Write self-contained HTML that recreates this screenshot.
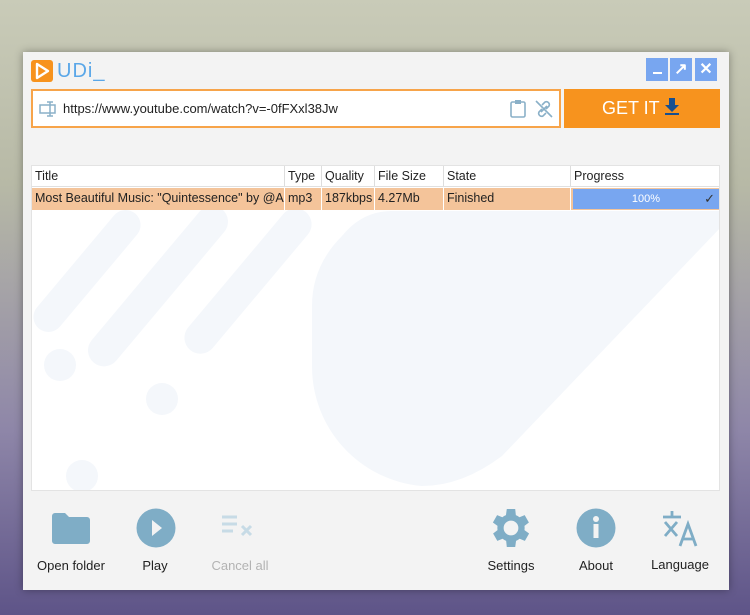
<!DOCTYPE html>
<html><head><meta charset="utf-8"><style>
*{margin:0;padding:0;box-sizing:border-box}
body{width:750px;height:615px;overflow:hidden;position:relative;font-family:"Liberation Sans",sans-serif;
background:linear-gradient(180deg,#c9cbb8 0%,#b7b9a6 30%,#8e86a8 70%,#5e5488 100%);}
.win{position:absolute;left:23px;top:52px;width:706px;height:538px;background:#f3f3f3;box-shadow:0 0 8px rgba(0,0,0,.35)}
.abs{position:absolute}
.tb{position:absolute;top:6px;width:22px;height:23px;background:#78a6f0;color:#fff;font-size:16px;text-align:center;line-height:23px;font-weight:bold}
.th,.td{position:absolute;top:0;height:100%;font-size:12.5px;color:#222;padding-left:3px;line-height:21px;white-space:nowrap;overflow:hidden}
.th{border-right:1px solid #ddd}
.lbl{position:absolute;top:506px;width:100px;text-align:center;font-size:13px;color:#222}
</style></head><body>
<div class="win">
  <svg class="abs" style="left:8px;top:8px" width="22" height="22"><rect width="22" height="22" rx="3" fill="#f7931e"/><path d="M6 4 L17 11 L6 18 Z" fill="none" stroke="#fff" stroke-width="2.4" stroke-linejoin="round"/></svg>
  <div class="abs" style="left:34px;top:8px;font-size:20px;color:#5aa7e8;letter-spacing:1px">UDi_</div>
  <div class="tb" style="left:623px"><span style="display:block;width:9px;height:2px;background:#fff;margin:14px auto 0"></span></div>
  <div class="tb" style="left:647px">&#8599;</div>
  <div class="tb" style="left:672px">&#10005;</div>
  <div class="abs" style="left:8px;top:37px;width:530px;height:39px;background:#fff;border:2px solid #f7a44a"></div>
  <svg class="abs" style="left:16px;top:48px" width="18" height="18"><rect x="1" y="5" width="15" height="8" fill="none" stroke="#8ab0c8" stroke-width="1.5"/><path d="M11 2V16M8 2H14M8 16H14" stroke="#8ab0c8" stroke-width="1.5"/></svg>
  <div class="abs" style="left:40px;top:49px;font-size:13px;color:#222">https://www.youtube.com/watch?v=-0fFXxl38Jw</div>
  <svg class="abs" style="left:486px;top:47px" width="18" height="20"><rect x="2" y="3" width="14" height="15" rx="1.5" fill="none" stroke="#8ab0c8" stroke-width="1.6"/><rect x="6" y="1" width="6" height="4" fill="#8ab0c8"/></svg>
  <svg class="abs" style="left:511px;top:47px" width="20" height="20"><path d="M8 6l3-3a3 3 0 014 4l-3 3M12 14l-3 3a3 3 0 01-4-4l3-3M7 13l6-6M2 2l16 16" fill="none" stroke="#8ab0c8" stroke-width="1.6"/></svg>
  <div class="abs" style="left:541px;top:37px;width:156px;height:39px;background:#f7931e;color:#fff;font-size:18px;line-height:39px;padding-left:38px">GET IT <span style="display:inline-block;vertical-align:middle"><svg width="16" height="18"><path d="M5 1h6v7h4l-7 7-7-7h4z" fill="#174f8f"/><rect x="1" y="16" width="14" height="2" fill="#174f8f"/></svg></span></div>
  <div class="abs" style="left:8px;top:113px;width:689px;height:326px;background:#fff;border:1px solid #e3e3e3;overflow:hidden">
    <svg class="abs" style="left:0;top:0" width="689" height="326">
      <g fill="#f4f7fb">
        <path d="M590 45 L690 45 L690 60 L470 290 Q430 320 390 320 A120 120 0 0 1 280 200 L280 140 Q280 100 310 70 Q330 45 360 45Z"/>
        <rect x="40" y="30" width="30" height="150" rx="15" transform="rotate(40 55 105)"/>
        <rect x="110" y="20" width="32" height="200" rx="16" transform="rotate(40 126 120)"/>
        <rect x="200" y="25" width="32" height="180" rx="16" transform="rotate(40 216 115)"/>
        <circle cx="28" cy="199" r="16"/><circle cx="130" cy="233" r="16"/><circle cx="50" cy="310" r="16"/>
      </g>
    </svg>
    <div class="abs" style="left:0;top:0;width:689px;height:21px;background:#fff;border-bottom:1px solid #e0e0e0">
      <div class="th" style="left:0;width:253px">Title</div><div class="th" style="left:253px;width:37px">Type</div><div class="th" style="left:290px;width:53px">Quality</div><div class="th" style="left:343px;width:69px">File Size</div><div class="th" style="left:412px;width:127px">State</div><div class="th" style="left:539px;width:150px;border:0">Progress</div>
    </div>
    <div class="abs" style="left:0;top:22px;width:689px;height:22px;background:#f4c49a">
      <div class="td" style="left:0;width:253px;border-right:1px solid #fff">Most Beautiful Music: "Quintessence" by @Ahmed</div><div class="td" style="left:253px;width:37px;border-right:1px solid #fff">mp3</div><div class="td" style="left:290px;width:53px;border-right:1px solid #fff">187kbps</div><div class="td" style="left:343px;width:69px;border-right:1px solid #fff">4.27Mb</div><div class="td" style="left:412px;width:127px;border-right:1px solid #fff">Finished</div>
      <div class="abs" style="left:541px;top:1px;width:146px;height:20px;background:#78a6f0;color:#fff;font-size:11px;text-align:center;line-height:20px">100%<span style="position:absolute;right:4px;color:#333;font-size:13px">&#10003;</span></div>
    </div>
  </div>
  <!-- bottom icons (window coords: screen - 23,52) -->
  <svg class="abs" style="left:28px;top:460px" width="40" height="32"><path d="M1 4a3 3 0 013-3h10l4 4h18a3 3 0 013 3v21a3 3 0 01-3 3H4a3 3 0 01-3-3z" fill="#7fadc6"/></svg>
  <svg class="abs" style="left:113px;top:456px" width="40" height="40"><circle cx="20" cy="20" r="19.5" fill="#7fadc6"/><path d="M16 12l10 8-10 8z" fill="#f3f3f3"/></svg>
  <svg class="abs" style="left:197px;top:462px" width="40" height="24"><g stroke="#c7dbe6" stroke-width="3"><path d="M2 3h15M2 10h15M2 17h11M22 12l9 9M31 12l-9 9"/></g></svg>
  <svg class="abs" style="left:468px;top:456px" width="40" height="40" viewBox="2.5 2.5 19 19"><path fill="#7fadc6" fill-rule="evenodd" d="M19.4 13a7.5 7.5 0 000-2l2.1-1.6-2-3.5-2.5 1a7 7 0 00-1.7-1L15 3h-4l-.4 2.9a7 7 0 00-1.7 1l-2.5-1-2 3.5L6.6 11a7.5 7.5 0 000 2l-2.1 1.6 2 3.5 2.5-1a7 7 0 001.7 1L11 21h4l.4-2.9a7 7 0 001.7-1l2.5 1 2-3.5zM13 15.5a3.5 3.5 0 110-7 3.5 3.5 0 010 7z" transform="translate(-1 0)"/></svg>
  <svg class="abs" style="left:553px;top:456px" width="40" height="40"><circle cx="20" cy="20" r="19.5" fill="#7fadc6"/><rect x="17.5" y="16" width="5" height="14" fill="#f3f3f3"/><circle cx="20" cy="11" r="3" fill="#f3f3f3"/></svg>
  <svg class="abs" style="left:637px;top:458px" width="42" height="38"><g stroke="#7fadc6" stroke-width="2.8" fill="none"><path d="M3 7h18M12 1v6M5 12l12 14M17 12L5 26M20 36l8-22 8 22M23 29h10"/></g></svg>
  <div class="lbl" style="left:-2px">Open folder</div>
  <div class="lbl" style="left:82px">Play</div>
  <div class="lbl" style="left:167px;color:#b3b3b3">Cancel all</div>
  <div class="lbl" style="left:438px">Settings</div>
  <div class="lbl" style="left:523px">About</div>
  <div class="lbl" style="left:607px;top:505px">Language</div>
</div>
</body></html>
